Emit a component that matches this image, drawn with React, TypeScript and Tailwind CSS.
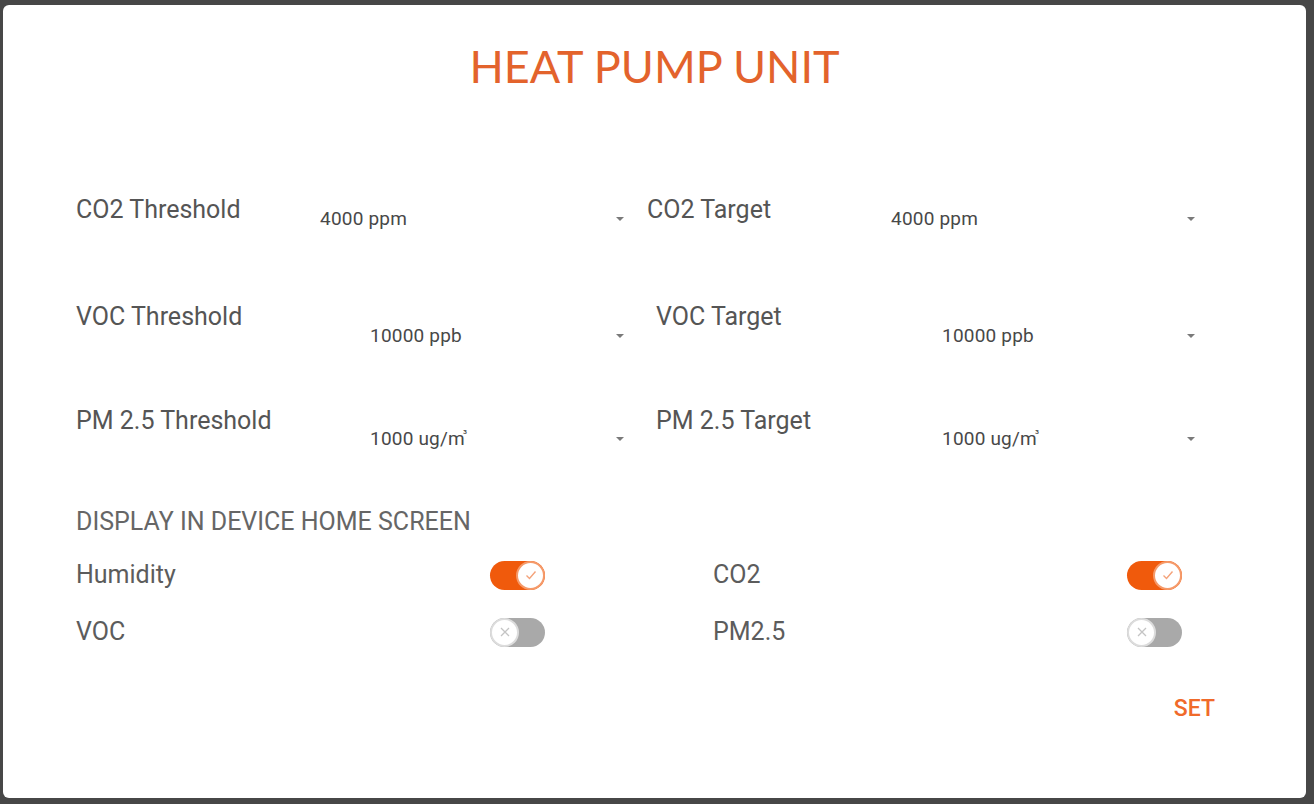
import React from "react";

function Arrow() {
  return (
    <svg width="10" height="6" viewBox="0 0 10 6" className="shrink-0">
      <path d="M1 1 L9 1 L5 5 Z" fill="#7a7a7a" />
    </svg>
  );
}

function Select({ value, width, top, unit }: { value: string; width: string; top: string; unit?: boolean }) {
  return (
    <div className={`flex items-center justify-between ${width} ${top}`}>
      <span className="text-[19px] text-[#484848] tracking-[0.2px]">
        {value}
        {unit ? (
          <>
            m<span className="text-[11px] relative -top-[7px] -ml-[2px]">³</span>
          </>
        ) : null}
      </span>
      <Arrow />
    </div>
  );
}

function Toggle({ on }: { on: boolean }) {
  if (on) {
    return (
      <div className="relative w-[55px] h-[29px] rounded-full bg-[#f05a0c]">
        <div className="absolute right-0 top-0 w-[29px] h-[29px] rounded-full bg-white border-2 border-[#f59a6a] flex items-center justify-center">
          <svg width="14" height="14" viewBox="0 0 14 14">
            <path d="M2.5 7.5 L5.5 10.5 L11.5 3.5" fill="none" stroke="#f4a27a" strokeWidth="1.4" />
          </svg>
        </div>
      </div>
    );
  }
  return (
    <div className="relative w-[55px] h-[29px] rounded-full bg-[#a9a9a9]">
      <div className="absolute left-0 top-0 w-[29px] h-[29px] rounded-full bg-white border-2 border-[#dcdcdc] flex items-center justify-center">
        <svg width="14" height="14" viewBox="0 0 14 14">
          <path d="M3 3 L11 11 M11 3 L3 11" fill="none" stroke="#c4c4c4" strokeWidth="1.3" />
        </svg>
      </div>
    </div>
  );
}

export default function App() {
  return (
    <div className="w-[1314px] h-[804px] bg-[#474747] pt-[5px] pl-[3px]" style={{ fontFamily: "Roboto, 'Noto Sans', sans-serif" }}>
      <div className="w-[1303px] h-[793px] bg-white rounded-[6px] flex flex-col pl-[73px]">
        <h1
          className="text-center text-[45px] leading-none text-[#e3632c] mt-[39px] -ml-[73px]"
          style={{ fontFamily: "Lato, 'Noto Sans', sans-serif" }}
        >
          HEAT PUMP UNIT
        </h1>

        {/* Row 1 */}
        <div className="flex mt-[108px] text-[#555]">
          <div className="flex w-[571px]">
            <div className="w-[244px] text-[25px] leading-none">CO2 Threshold</div>
            <Select value="4000 ppm" width="w-[305px]" top="mt-[8px]" />
          </div>
          <div className="flex">
            <div className="w-[244px] text-[25px] leading-none">CO2 Target</div>
            <Select value="4000 ppm" width="w-[305px]" top="mt-[8px]" />
          </div>
        </div>

        {/* Row 2 */}
        <div className="flex mt-[70px] text-[#555]">
          <div className="flex w-[580px]">
            <div className="w-[294px] text-[25px] leading-none">VOC Threshold</div>
            <Select value="10000 ppb" width="w-[255px]" top="mt-[18px]" />
          </div>
          <div className="flex">
            <div className="w-[286px] text-[25px] leading-none">VOC Target</div>
            <Select value="10000 ppb" width="w-[254px]" top="mt-[18px]" />
          </div>
        </div>

        {/* Row 3 */}
        <div className="flex mt-[58px] text-[#555]">
          <div className="flex w-[580px]">
            <div className="w-[294px] text-[25px] leading-none">PM 2.5 Threshold</div>
            <Select value="1000 ug/" unit width="w-[255px]" top="mt-[17px]" />
          </div>
          <div className="flex">
            <div className="w-[286px] text-[25px] leading-none">PM 2.5 Target</div>
            <Select value="1000 ug/" unit width="w-[254px]" top="mt-[17px]" />
          </div>
        </div>

        <div className="mt-[55px] text-[25px] leading-none text-[#666]">DISPLAY IN DEVICE HOME SCREEN</div>

        <div className="grid grid-cols-[637px_469px] mt-[27px] text-[25px] text-[#5c5c5c]">
          <div className="flex items-center justify-between pr-[168px] h-[29px]">
            <span>Humidity</span>
            <Toggle on />
          </div>
          <div className="flex items-center justify-between h-[29px]">
            <span>CO2</span>
            <Toggle on />
          </div>
          <div className="flex items-center justify-between pr-[168px] h-[29px] mt-[28px]">
            <span>VOC</span>
            <Toggle on={false} />
          </div>
          <div className="flex items-center justify-between h-[29px] mt-[28px]">
            <span>PM2.5</span>
            <Toggle on={false} />
          </div>
        </div>

        <div className="flex justify-end pr-[91px] mt-[50px]">
          <span className="text-[23px] leading-none font-medium text-[#f06a2a]">SET</span>
        </div>
      </div>
    </div>
  );
}
